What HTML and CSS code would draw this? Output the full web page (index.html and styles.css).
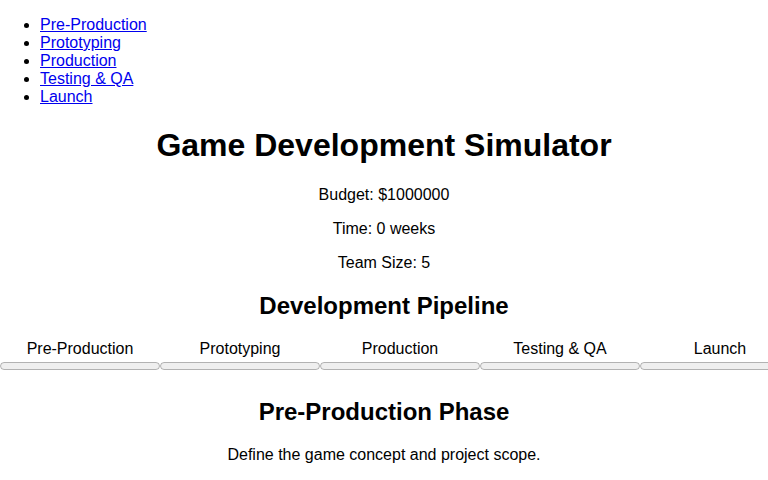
FILE: index.html
```html
<!DOCTYPE html>
<html lang="en">
<head>
<meta charset="utf-8">
<title>Game Development Simulator</title>
<link rel="stylesheet" href="styles.css">
</head>
<body>
<nav>
  <ul>
    <li><a href="#pre-production">Pre-Production</a></li>
    <li><a href="#prototyping">Prototyping</a></li>
    <li><a href="#production">Production</a></li>
    <li><a href="#testing">Testing &amp; QA</a></li>
    <li><a href="#launch">Launch</a></li>
  </ul>
</nav>
<main class="sim">
  <h1>Game Development Simulator</h1>
  <p>Budget: $1000000</p>
  <p>Time: 0 weeks</p>
  <p>Team Size: 5</p>

  <h2>Development Pipeline</h2>
  <div class="pipeline">
    <div class="stage">
      <div class="stage-name">Pre-Production</div>
      <progress class="stage-progress" value="0" max="100"></progress>
    </div>
    <div class="stage">
      <div class="stage-name">Prototyping</div>
      <progress class="stage-progress" value="0" max="100"></progress>
    </div>
    <div class="stage">
      <div class="stage-name">Production</div>
      <progress class="stage-progress" value="0" max="100"></progress>
    </div>
    <div class="stage">
      <div class="stage-name">Testing &amp; QA</div>
      <progress class="stage-progress" value="0" max="100"></progress>
    </div>
    <div class="stage">
      <div class="stage-name">Launch</div>
      <progress class="stage-progress" value="0" max="100"></progress>
    </div>
  </div>

  <section class="phase" id="pre-production">
    <h2>Pre-Production Phase</h2>
    <p>Define the game concept and project scope.</p>
  </section>
</main>
</body>
</html>
```

FILE: styles.css
```css
body {
  margin: 0;
  font-family: "Liberation Sans", Arial, sans-serif;
  font-size: 16px;
  color: #000;
  background: #fff;
}

.sim {
  text-align: center;
}

.pipeline {
  display: flex;
}

.stage {
  text-align: center;
}

.stage-progress {
  display: block;
  margin: 0 0 4px;
}

.phase {
  text-align: center;
}
```
